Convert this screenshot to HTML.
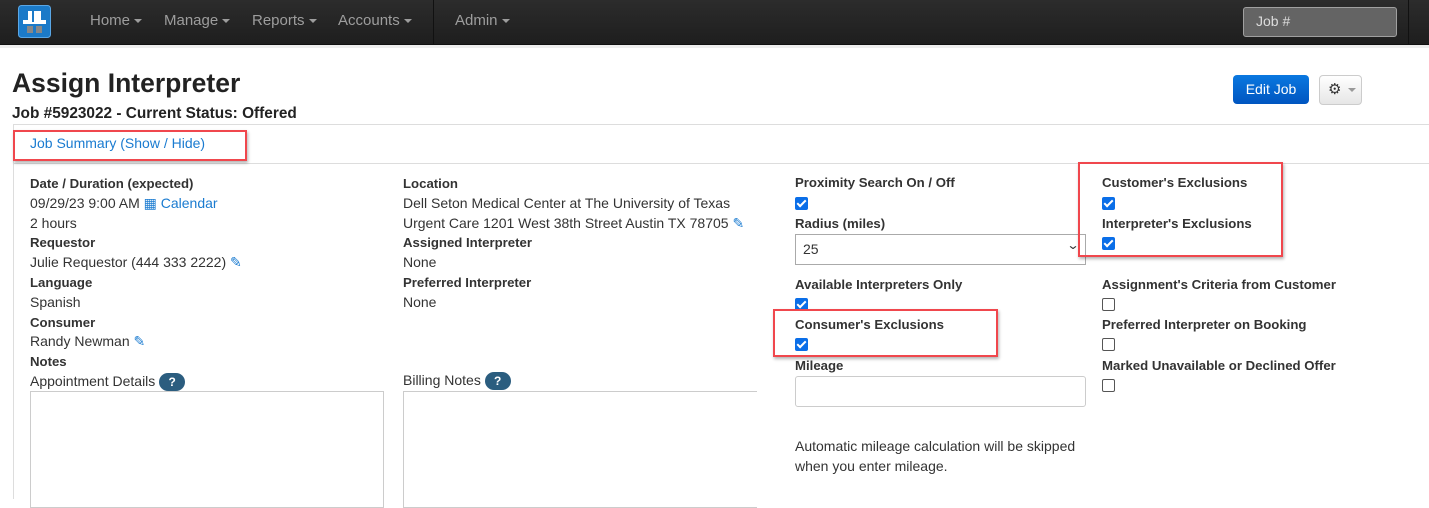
<html><head><style>
body{margin:0;width:1429px;height:499px;overflow:hidden;background:#fff;font-family:"Liberation Sans",Arial,sans-serif;font-size:14px;color:#333;position:relative}
.a{position:absolute;white-space:nowrap}
.nav{position:absolute;left:0;top:0;width:1429px;height:44px;background:linear-gradient(#2c2c2c,#1e1e1e);border-bottom:1px solid #111}
.nv{position:absolute;top:12px;color:#9d9d9d;font-size:15px}
.car{display:inline-block;width:0;height:0;border-left:4px solid transparent;border-right:4px solid transparent;border-top:4px solid #9d9d9d;vertical-align:middle;margin-left:4px}
b{font-weight:bold;font-size:13.2px}
.cb{position:absolute;width:13px;height:13px;border-radius:2px}
.on{background:#0a6ee8}
.on:after{content:"";position:absolute;left:4px;top:1px;width:3px;height:7px;border:solid #fff;border-width:0 2px 2px 0;transform:rotate(45deg)}
.off{border:1px solid #555;width:11px;height:11px;background:#fff}
.red{position:absolute;border:2.5px solid #f0474d;box-shadow:1px 2px 3px rgba(0,0,0,.3)}
.lnk{color:#1a7bd0}
.q{display:inline-block;width:26px;height:18px;border-radius:9px;background:#2b5d7f;color:#fff;font-weight:bold;font-size:12px;text-align:center;line-height:18px;vertical-align:middle}
</style></head><body>
<div class="nav">
<svg class="a" style="left:18px;top:5px" width="33" height="33" viewBox="0 0 33 33"><rect x="0.5" y="0.5" width="32" height="32" rx="3" fill="#1b7ac8" stroke="#5aa7e6"/><rect x="10" y="6" width="13" height="10" fill="#fff"/><rect x="5" y="15" width="23" height="4" fill="#fff"/><rect x="14" y="5" width="2" height="12" fill="#1b7ac8"/><rect x="9" y="21" width="6" height="7" fill="#888"/><rect x="18" y="21" width="6" height="7" fill="#888"/></svg>
<span class="nv" style="left:90px">Home<span class="car"></span></span>
<span class="nv" style="left:164px">Manage<span class="car"></span></span>
<span class="nv" style="left:252px">Reports<span class="car"></span></span>
<span class="nv" style="left:338px">Accounts<span class="car"></span></span>
<div class="a" style="left:433px;top:0;width:1px;height:44px;background:#111"></div>
<span class="nv" style="left:455px">Admin<span class="car"></span></span>
<div class="a" style="left:1243px;top:7px;width:152px;height:28px;background:#646464;border:1px solid #a0a0a0;border-radius:3px"></div>
<span class="a" style="left:1256px;top:13px;color:#ddd;font-size:14px">Job #</span>
<div class="a" style="left:1408px;top:0;width:1px;height:44px;background:#111"></div>
</div>
<div class="a" style="left:0;top:45px;width:1429px;height:3px;background:#eee"></div>
<div class="a" style="left:12px;top:68px;font-size:26.5px;font-weight:bold;color:#222">Assign Interpreter</div>
<div class="a" style="left:12px;top:105px;font-size:15.4px;font-weight:bold;color:#222">Job #5923022 - Current Status: Offered</div>
<div class="a" style="left:1233px;top:75px;width:76px;height:29px;border-radius:4px;background:linear-gradient(#0a78e0,#0055c0);color:#fff;text-align:center;line-height:29px;font-size:14px">Edit Job</div>
<div class="a" style="left:1319px;top:75px;width:41px;height:28px;border-radius:4px;border:1px solid #ccc;background:linear-gradient(#fff,#e6e6e6)"><span class="a" style="left:8px;top:4px;font-size:15px;color:#333">⚙</span><span class="car" style="position:absolute;left:24px;top:12px;border-top-color:#999"></span></div>
<div class="a" style="left:13px;top:124px;width:1416px;height:1px;background:#ddd"></div>
<div class="a" style="left:13px;top:124px;width:1px;height:375px;background:#ddd"></div>
<div class="a" style="left:13px;top:163px;width:1416px;height:1px;background:#ddd"></div>
<span class="a lnk" style="left:30px;top:135px">Job Summary (Show / Hide)</span>
<div class="red" style="left:13px;top:130px;width:230px;height:27px"></div>

<div class="a" style="left:30px;top:174px;line-height:19.8px">
<b>Date / Duration (expected)</b><br>09/29/23 9:00 AM <span class="lnk">▦ Calendar</span><br>2 hours<br><b>Requestor</b><br>Julie Requestor (444 333 2222) <span class="lnk">✎</span><br><b>Language</b><br>Spanish<br><b>Consumer</b><br>Randy Newman <span class="lnk">✎</span><br><b>Notes</b><br>Appointment Details <span class="q">?</span></div>
<div class="a" style="left:403px;top:174px;line-height:19.8px">
<b>Location</b><br>Dell Seton Medical Center at The University of Texas<br>Urgent Care 1201 West 38th Street Austin TX 78705 <span class="lnk">✎</span><br><b>Assigned Interpreter</b><br>None<br><b>Preferred Interpreter</b><br>None</div>
<div class="a" style="left:403px;top:372px">Billing Notes <span class="q">?</span></div>
<div class="a" style="left:30px;top:391px;width:352px;height:115px;border:1px solid #ccc"></div>
<div class="a" style="left:403px;top:391px;width:353px;height:115px;border:1px solid #ccc;border-right:none"></div>

<b class="a" style="left:795px;top:175px">Proximity Search On / Off</b>
<div class="cb on" style="left:795px;top:197px"></div>
<b class="a" style="left:795px;top:216px">Radius (miles)</b>
<div class="a" style="left:795px;top:234px;width:289px;height:29px;border:1px solid #aaa"></div>
<span class="a" style="left:803px;top:241px">25</span>
<span class="a" style="left:1068px;top:238px;font-size:12px;transform:scaleX(1.3)">⌄</span>
<b class="a" style="left:795px;top:277px">Available Interpreters Only</b>
<div class="cb on" style="left:795px;top:298px"></div>
<b class="a" style="left:795px;top:317px">Consumer's Exclusions</b>
<div class="cb on" style="left:795px;top:338px"></div>
<div class="red" style="left:773px;top:309px;width:221px;height:44px"></div>
<b class="a" style="left:795px;top:358px">Mileage</b>
<div class="a" style="left:795px;top:376px;width:289px;height:29px;border:1px solid #ccc;border-radius:3px"></div>
<div class="a" style="left:795px;top:436px;line-height:20px">Automatic mileage calculation will be skipped<br>when you enter mileage.</div>

<b class="a" style="left:1102px;top:175px">Customer's Exclusions</b>
<div class="cb on" style="left:1102px;top:197px"></div>
<b class="a" style="left:1102px;top:216px">Interpreter's Exclusions</b>
<div class="cb on" style="left:1102px;top:237px"></div>
<div class="red" style="left:1078px;top:162px;width:201px;height:91px"></div>
<b class="a" style="left:1102px;top:277px">Assignment's Criteria from Customer</b>
<div class="cb off" style="left:1102px;top:298px"></div>
<b class="a" style="left:1102px;top:317px">Preferred Interpreter on Booking</b>
<div class="cb off" style="left:1102px;top:338px"></div>
<b class="a" style="left:1102px;top:358px">Marked Unavailable or Declined Offer</b>
<div class="cb off" style="left:1102px;top:379px"></div>
</body></html>
